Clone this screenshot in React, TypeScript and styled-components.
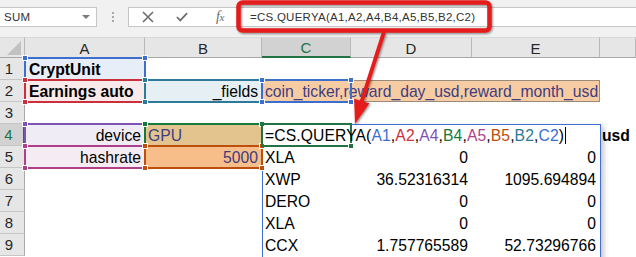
import React from "react";
import styled, { createGlobalStyle } from "styled-components";

const GlobalStyle = createGlobalStyle`
  html, body { margin: 0; padding: 0; background: #fff; }
  body { font-family: "Liberation Sans", Arial, sans-serif; overflow: hidden; }
  * { box-sizing: border-box; }
`;

const GREEN = "#217346";

const Window = styled.div`
  position: relative;
  width: 636px;
  height: 257px;
  overflow: hidden;
  background: #fff;
`;

const Toolbar = styled.div`
  display: flex;
  align-items: flex-start;
  height: 37px;
  padding-top: 7px;
  background: #f1f1f1;
  font-family: "Liberation Sans", Arial, sans-serif;
  font-size: 11.5px;
  color: #333;
`;

const NameBox = styled.div`
  display: flex;
  align-items: center;
  justify-content: space-between;
  width: 97px;
  height: 20px;
  padding: 0 6px 0 4px;
  background: #fff;
  border: 1px solid #c6c6c6;
  border-left: none;
  letter-spacing: 0.3px;
`;

const Caret = styled.span`
  width: 0;
  height: 0;
  border-left: 4px solid transparent;
  border-right: 4px solid transparent;
  border-top: 4px solid #7a7a7a;
`;

const Grip = styled.div`
  width: 31px;
  height: 20px;
  display: flex;
  flex-direction: column;
  align-items: center;
  justify-content: center;
  gap: 2px;
`;

const Dot = styled.span`
  width: 2px;
  height: 2px;
  background: #a8a8a8;
`;

const ButtonGroup = styled.div`
  display: flex;
  align-items: center;
  width: 108px;
  height: 20px;
  padding-left: 13px;
  gap: 22px;
  background: #fff;
  border: 1px solid #c6c6c6;
  border-right: none;
`;

const IconButton = styled.span`
  display: flex;
  align-items: center;
  justify-content: center;
  width: 12px;
  height: 12px;
  color: #6d6d6d;
`;

const FxLabel = styled.span`
  margin-left: 6px;
  font-family: "Liberation Serif", "Times New Roman", serif;
  font-style: italic;
  font-size: 14px;
  color: #6a6a6a;
  letter-spacing: -0.5px;
  small { font-size: 11px; }
`;

const FormulaInput = styled.div`
  flex: 1;
  display: flex;
  align-items: center;
  height: 20px;
  padding-left: 14px;
  background: #fff;
  border-top: 1px solid #c6c6c6;
  border-bottom: 1px solid #c6c6c6;
  letter-spacing: 0.25px;
  white-space: nowrap;
`;

const Sheet = styled.div`
  display: grid;
  width: 636px;
  grid-template-columns: 25px 120px 117px 89px 121px 128px 36px;
  grid-template-rows: 21px repeat(9, 22px);
  font-family: "Liberation Sans", Arial, sans-serif;
  font-size: 15.7px;
`;

const Corner = styled.div`
  display: flex;
  align-items: flex-end;
  justify-content: flex-end;
  padding: 0 3px 2px 0;
  background: #e6e6e6;
  border-top: 1px solid #d8d8d8;
  border-right: 1px solid #b9b9b9;
  border-bottom: 1px solid #a8a8a8;
`;

const CornerTriangle = styled.span`
  width: 0;
  height: 0;
  border-left: 14px solid transparent;
  border-bottom: 14px solid #c2c2c2;
`;

const ColHeader = styled.div<{ $active?: boolean }>`
  display: flex;
  align-items: center;
  justify-content: center;
  padding-top: 1px;
  font-size: 15px;
  color: ${(p) => (p.$active ? GREEN : "#262626")};
  background: ${(p) => (p.$active ? "#d2d2d2" : "#e6e6e6")};
  border-top: 1px solid #d8d8d8;
  border-right: 1px solid #b9b9b9;
  border-bottom: ${(p) => (p.$active ? `2px solid ${GREEN}` : "1px solid #a8a8a8")};
`;

const RowHeader = styled.div<{ $active?: boolean }>`
  display: flex;
  align-items: flex-end;
  justify-content: center;
  padding: 0 6px 1px 0;
  line-height: 18px;
  font-size: 15px;
  color: ${(p) => (p.$active ? GREEN : "#262626")};
  background: ${(p) => (p.$active ? "#d2d2d2" : "#e6e6e6")};
  border-bottom: 1px solid #c6c6c6;
  border-right: ${(p) => (p.$active ? `2px solid ${GREEN}` : "1px solid #a9a9a9")};
`;

const Cell = styled.div<{
  $align?: "left" | "right";
  $bold?: boolean;
  $bg?: string;
  $color?: string;
  $span?: number;
  $framed?: boolean;
  $positioned?: boolean;
}>`
  position: ${(p) => (p.$positioned ? "relative" : "static")};
  grid-column: span ${(p) => p.$span ?? 1};
  display: flex;
  align-items: flex-end;
  justify-content: ${(p) => (p.$align === "right" ? "flex-end" : "flex-start")};
  padding: 0 ${(p) => (p.$align === "right" ? "4px" : "0")} 1px
    ${(p) => (p.$align === "right" ? "0" : "3px")};
  line-height: 18px;
  white-space: nowrap;
  overflow: visible;
  font-weight: ${(p) => (p.$bold ? 700 : 400)};
  color: ${(p) => p.$color ?? "#000"};
  background: ${(p) => p.$bg ?? "#fff"};
  box-shadow: ${(p) => (p.$framed ? "inset 0 0 0 1px #9a8a7c" : "none")};
`;

const BoldLead = styled.span`
  padding-left: 1px;
`;

const RefBox = styled.span<{ $c: string; $w?: number }>`
  position: absolute;
  top: -1px;
  bottom: -1px;
  left: -1px;
  ${(p) => (p.$w ? `width: ${p.$w}px;` : "right: -1px;")}
  border: 2px solid ${(p) => p.$c};
  z-index: 3;
  pointer-events: none;
`;

const Handle = styled.span<{ $c: string; $v: "top" | "bottom"; $h: "left" | "right" }>`
  position: absolute;
  ${(p) => p.$v}: -4px;
  ${(p) => p.$h}: -4px;
  width: 6px;
  height: 6px;
  background: ${(p) => p.$c};
  border: 1px solid #fff;
`;

const ActiveOutline = styled.span`
  position: absolute;
  top: -1px;
  left: -1px;
  width: 91px;
  height: 24px;
  border: 2px solid ${GREEN};
  z-index: 4;
  pointer-events: none;
`;

const FillHandle = styled.span`
  position: absolute;
  right: -4px;
  bottom: -4px;
  width: 6px;
  height: 6px;
  background: ${GREEN};
  border: 1px solid #fff;
`;

const SpillBox = styled.span`
  position: absolute;
  top: 0;
  left: 0;
  width: 339px;
  height: 140px;
  border: 1px solid #3f6fd1;
  box-shadow: 3px 2px 5px rgba(0, 0, 0, 0.22);
  z-index: 2;
  pointer-events: none;
`;

const RefText = styled.span<{ $c: string }>`
  color: ${(p) => p.$c};
`;

const Caret2 = styled.span`
  display: inline-block;
  width: 1px;
  height: 17px;
  margin-left: 1px;
  background: #000;
  vertical-align: -3px;
`;

const EditText = styled.span`
  position: relative;
  z-index: 5;
  letter-spacing: 0.1px;
`;

const OverflowText = styled.span`
  margin-left: -1px;
`;

const Annotation = styled.svg`
  position: absolute;
  top: 0;
  left: 0;
  width: 636px;
  height: 257px;
  pointer-events: none;
  z-index: 10;
`;

const COLORS = {
  blue: "#3b6ecf",
  red: "#cc2f3b",
  purple: "#7e53b6",
  green: "#17793b",
  magenta: "#b03f8b",
  orange: "#bd4f0c",
  teal: "#2c7a9a",
};

const NAVY = "#3d3d80";

type Spec = {
  text?: React.ReactNode;
  align?: "left" | "right";
  bold?: boolean;
  bg?: string;
  color?: string;
  refColor?: string;
  refWidth?: number;
  span?: number;
  framed?: boolean;
  editor?: boolean;
};

const FORMULA_REFS: [string, string][] = [
  ["A1", COLORS.blue],
  ["A2", COLORS.red],
  ["A4", COLORS.purple],
  ["B4", COLORS.green],
  ["A5", COLORS.magenta],
  ["B5", COLORS.orange],
  ["B2", COLORS.teal],
  ["C2", COLORS.blue],
];

const FormulaEdit = () => (
  <EditText>
    =CS.QUERYA(
    {FORMULA_REFS.map(([r, c], i) => (
      <React.Fragment key={r}>
        {i > 0 && ","}
        <RefText $c={c}>{r}</RefText>
      </React.Fragment>
    ))}
    )<Caret2 />
  </EditText>
);

const R = (t: string): Spec => ({ text: t, align: "right" });
const L = (t: string): Spec => ({ text: t });

const rows: Spec[][] = [
  [
    { text: <BoldLead>CryptUnit</BoldLead>, bold: true, bg: "#e8eef8", refColor: COLORS.blue },
    {}, {}, {}, {}, {},
  ],
  [
    { text: <BoldLead>Earnings auto</BoldLead>, bold: true, bg: "#f8e9eb", refColor: COLORS.red },
    { text: "_fields", align: "right", bg: "#e6eff3", refColor: COLORS.teal },
    {
      text: "coin_ticker,reward_day_usd,reward_month_usd",
      bg: "#f8cca2",
      color: NAVY,
      refColor: COLORS.blue,
      refWidth: 91,
      span: 3,
      framed: true,
    },
    {},
  ],
  [{}, {}, {}, {}, {}, {}],
  [
    { text: "device", align: "right", bg: "#f0ecf6", refColor: COLORS.purple },
    { text: "GPU", bg: "#e3c48f", color: NAVY, refColor: COLORS.green },
    { editor: true, span: 3 },
    { text: <OverflowText>usd</OverflowText>, bold: true },
  ],
  [
    { text: "hashrate", align: "right", bg: "#f5ebf2", refColor: COLORS.magenta },
    { text: "5000", align: "right", bg: "#f7be8a", color: NAVY, refColor: COLORS.orange },
    L("XLA"), R("0"), R("0"), {},
  ],
  [{}, {}, L("XWP"), R("36.52316314"), R("1095.694894"), {}],
  [{}, {}, L("DERO"), R("0"), R("0"), {}],
  [{}, {}, L("XLA"), R("0"), R("0"), {}],
  [{}, {}, L("CCX"), R("1.757765589"), R("52.73296766"), {}],
];

// Column F's letter sits beyond the visible window, so its header shows no text.
const HEADERS = ["A", "B", "C", "D", "E", ""];

const Handles = ({ c }: { c: string }) => (
  <>
    <Handle $c={c} $v="top" $h="left" />
    <Handle $c={c} $v="top" $h="right" />
    <Handle $c={c} $v="bottom" $h="left" />
    <Handle $c={c} $v="bottom" $h="right" />
  </>
);

const SheetCell = ({ spec }: { spec: Spec }) => {
  if (spec.editor) {
    return (
      <Cell $span={spec.span} $positioned>
        <FormulaEdit />
        <SpillBox />
        <ActiveOutline>
          <FillHandle />
        </ActiveOutline>
      </Cell>
    );
  }
  const positioned = !!spec.refColor || !!spec.bold;
  return (
    <Cell
      $align={spec.align}
      $bold={spec.bold}
      $bg={spec.bg}
      $color={spec.color}
      $span={spec.span}
      $framed={spec.framed}
      $positioned={positioned}
    >
      {spec.text}
      {spec.refColor && (
        <RefBox $c={spec.refColor} $w={spec.refWidth}>
          <Handles c={spec.refColor} />
        </RefBox>
      )}
    </Cell>
  );
};

const XIcon = () => (
  <svg width="12" height="12" viewBox="0 0 12 12">
    <path d="M1 1 L11 11 M11 1 L1 11" stroke="currentColor" strokeWidth="1.6" fill="none" />
  </svg>
);

const CheckIcon = () => (
  <svg width="14" height="12" viewBox="0 0 14 12">
    <path d="M1 6 L5 10 L13 1.5" stroke="currentColor" strokeWidth="2" fill="none" />
  </svg>
);

export default function App() {
  return (
    <>
      <GlobalStyle />
      <Window>
        <Toolbar>
          <NameBox>
            <span>SUM</span>
            <Caret />
          </NameBox>
          <Grip>
            <Dot />
            <Dot />
            <Dot />
          </Grip>
          <ButtonGroup>
            <IconButton>
              <XIcon />
            </IconButton>
            <IconButton>
              <CheckIcon />
            </IconButton>
            <FxLabel>
              f<small>x</small>
            </FxLabel>
          </ButtonGroup>
          <FormulaInput>=CS.QUERYA(A1,A2,A4,B4,A5,B5,B2,C2)</FormulaInput>
        </Toolbar>
        <Sheet>
          <Corner>
            <CornerTriangle />
          </Corner>
          {HEADERS.map((h, i) => (
            <ColHeader key={i} $active={h === "C"}>
              {h}
            </ColHeader>
          ))}
          {rows.map((row, ri) => (
            <React.Fragment key={ri}>
              <RowHeader $active={ri === 3}>{ri + 1}</RowHeader>
              {row.map((spec, ci) => (
                <SheetCell key={ci} spec={spec} />
              ))}
            </React.Fragment>
          ))}
        </Sheet>
        <Annotation viewBox="0 0 636 257">
          <defs>
            <filter id="redShadow" x="-5%" y="-20%" width="110%" height="150%">
              <feDropShadow dx="1" dy="1.2" stdDeviation="0.8" floodColor="#000" floodOpacity="0.45" />
            </filter>
          </defs>
          <g filter="url(#redShadow)">
            <rect x="238.5" y="2.5" width="251" height="28" rx="4" fill="none" stroke="#e41e1e" strokeWidth="4.5" />
            <line x1="384" y1="32" x2="361.5" y2="102" stroke="#e41e1e" strokeWidth="4" />
            <polygon points="355,124 369.5,103.3 354.1,98.7" fill="#e41e1e" />
          </g>
        </Annotation>
      </Window>
    </>
  );
}
